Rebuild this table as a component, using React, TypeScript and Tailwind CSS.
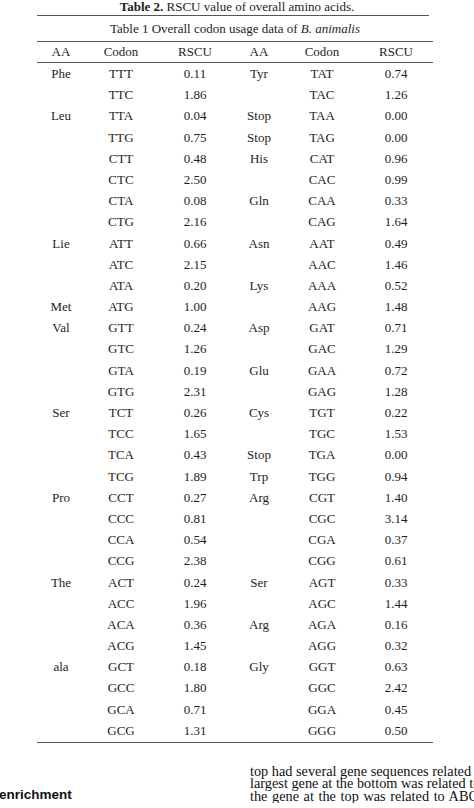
const rows: [string, string, string, string, string, string][] = [
  ["Phe", "TTT", "0.11", "Tyr", "TAT", "0.74"],
  ["", "TTC", "1.86", "", "TAC", "1.26"],
  ["Leu", "TTA", "0.04", "Stop", "TAA", "0.00"],
  ["", "TTG", "0.75", "Stop", "TAG", "0.00"],
  ["", "CTT", "0.48", "His", "CAT", "0.96"],
  ["", "CTC", "2.50", "", "CAC", "0.99"],
  ["", "CTA", "0.08", "Gln", "CAA", "0.33"],
  ["", "CTG", "2.16", "", "CAG", "1.64"],
  ["Lie", "ATT", "0.66", "Asn", "AAT", "0.49"],
  ["", "ATC", "2.15", "", "AAC", "1.46"],
  ["", "ATA", "0.20", "Lys", "AAA", "0.52"],
  ["Met", "ATG", "1.00", "", "AAG", "1.48"],
  ["Val", "GTT", "0.24", "Asp", "GAT", "0.71"],
  ["", "GTC", "1.26", "", "GAC", "1.29"],
  ["", "GTA", "0.19", "Glu", "GAA", "0.72"],
  ["", "GTG", "2.31", "", "GAG", "1.28"],
  ["Ser", "TCT", "0.26", "Cys", "TGT", "0.22"],
  ["", "TCC", "1.65", "", "TGC", "1.53"],
  ["", "TCA", "0.43", "Stop", "TGA", "0.00"],
  ["", "TCG", "1.89", "Trp", "TGG", "0.94"],
  ["Pro", "CCT", "0.27", "Arg", "CGT", "1.40"],
  ["", "CCC", "0.81", "", "CGC", "3.14"],
  ["", "CCA", "0.54", "", "CGA", "0.37"],
  ["", "CCG", "2.38", "", "CGG", "0.61"],
  ["The", "ACT", "0.24", "Ser", "AGT", "0.33"],
  ["", "ACC", "1.96", "", "AGC", "1.44"],
  ["", "ACA", "0.36", "Arg", "AGA", "0.16"],
  ["", "ACG", "1.45", "", "AGG", "0.32"],
  ["ala", "GCT", "0.18", "Gly", "GGT", "0.63"],
  ["", "GCC", "1.80", "", "GGC", "2.42"],
  ["", "GCA", "0.71", "", "GGA", "0.45"],
  ["", "GCG", "1.31", "", "GGG", "0.50"],
];

const cols = "grid grid-cols-[48px_72px_76px_52px_74px_74px] text-center";

export default function App() {
  return (
    <div className="w-[474px] h-[808px] overflow-hidden bg-white text-[#1e1e1e] font-['Liberation_Serif',serif] text-[13px]">
      <div className="h-[15px] leading-[14px] text-center">
        <span className="font-bold">Table 2.</span> RSCU value of overall amino acids.
      </div>

      <div className="ml-[37px] w-[396px]">
        <div className="mr-[4px] border-t-[1.5px] border-[#555]" />
        <div className="h-[25px] leading-[25px] text-center">
          Table 1 Overall codon usage data of <i>B. animalis</i>
        </div>
        <div className="border-t-[1.5px] border-[#555]" />
        <div className={`${cols} h-[20px] leading-[20px]`}>
          <div>AA</div>
          <div>Codon</div>
          <div>RSCU</div>
          <div>AA</div>
          <div>Codon</div>
          <div>RSCU</div>
        </div>
        <div className="border-t-[1.5px] border-[#555]" />
        <div>
          {rows.map((r, i) => (
            <div key={i} className={`${cols} h-[21.2px] leading-[21.2px]`}>
              {r.map((c, j) => (
                <div key={j}>{c}</div>
              ))}
            </div>
          ))}
        </div>
        <div className="mt-[0.5px] border-t-[1.5px] border-[#555]" />
      </div>

      <div className="mt-[22px] flex">
        <div className="w-[250px] pt-[22px]">
          <div className="font-['Liberation_Sans',sans-serif] font-bold text-[13.5px] leading-[16px] ml-[-1px] text-[#111]">
            enrichment
          </div>
        </div>
        <div className="flex-1 overflow-hidden whitespace-nowrap text-[14.3px] leading-[12.8px] text-[#111]">
          <div>top had several gene sequences related to</div>
          <div>largest gene at the bottom was related to</div>
          <div className="[word-spacing:1px]">the gene at the top was related to ABC</div>
        </div>
      </div>
    </div>
  );
}
